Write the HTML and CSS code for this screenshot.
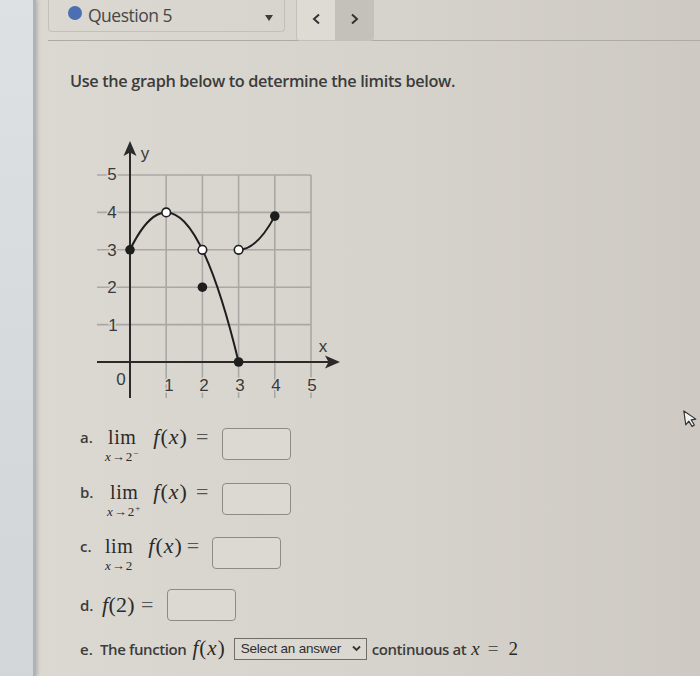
FILE: index.html
```html
<!DOCTYPE html>
<html>
<head>
<meta charset="utf-8">
<title>Question 5</title>
<link rel="stylesheet" href="styles.css">
</head>
<body>
<div class="sidebar"></div>
<div class="main">
  <div class="topbar">
    <div class="qbox">
      <span class="dot"></span>
      <span class="qtitle">Question 5</span>
      <span class="caret"></span>
    </div>
    <div class="nav">
      <span class="navbtn prev"><svg width="9" height="12" viewBox="0 0 9 12"><polyline points="7,1.5 2,6 7,10.5" fill="none" stroke="#333" stroke-width="2"/></svg></span>
      <span class="navbtn next"><svg width="9" height="12" viewBox="0 0 9 12"><polyline points="2,1.5 7,6 2,10.5" fill="none" stroke="#333" stroke-width="2"/></svg></span>
    </div>
  </div>

  <div class="content">
    <p class="intro">Use the graph below to determine the limits below.</p>

    <svg class="graph" width="262" height="265" viewBox="0 0 262 265">
      <g stroke="#a9a8a4" stroke-width="1.6">
        <line x1="12" y1="188.6" x2="226" y2="188.6"/>
        <line x1="12" y1="151.2" x2="226" y2="151.2"/>
        <line x1="12" y1="113.8" x2="226" y2="113.8"/>
        <line x1="12" y1="76.4" x2="226" y2="76.4"/>
        <line x1="12" y1="39" x2="226" y2="39"/>
        <line x1="81.2" y1="39" x2="81.2" y2="262"/>
        <line x1="117.4" y1="39" x2="117.4" y2="262"/>
        <line x1="153.6" y1="39" x2="153.6" y2="262"/>
        <line x1="189.8" y1="39" x2="189.8" y2="262"/>
        <line x1="226" y1="39" x2="226" y2="262"/>
      </g>
      <g stroke="#2a2a2a" stroke-width="2">
        <line x1="45" y1="262" x2="45" y2="14"/>
        <line x1="12" y1="226" x2="246" y2="226"/>
      </g>
      <polygon points="45,5 38.5,20 45,16.5 51.5,20" fill="#2a2a2a"/>
      <polygon points="255,226 240,219.5 243.5,226 240,232.5" fill="#2a2a2a"/>
      <g class="lbl" font-family="Liberation Sans, Arial, sans-serif" font-size="17" fill="#3a3a3a" text-anchor="middle">
        <text x="27" y="44">5</text>
        <text x="27" y="82">4</text>
        <text x="27" y="119.5">3</text>
        <text x="27" y="157">2</text>
        <text x="28" y="194.5">1</text>
        <text x="36" y="249">0</text>
        <text x="84" y="255">1</text>
        <text x="119" y="255">2</text>
        <text x="155" y="255">3</text>
        <text x="191" y="255">4</text>
        <text x="227" y="255">5</text>
      </g>
      <text x="60" y="23" font-family="Liberation Sans, Arial, sans-serif" font-size="17" fill="#3a3a3a" text-anchor="middle">y</text>
      <text x="238" y="216" font-family="Liberation Sans, Arial, sans-serif" font-size="17" fill="#3a3a3a" text-anchor="middle">x</text>
      <g fill="none" stroke="#1e1e1e" stroke-width="2">
        <path d="M45,113.8 Q99.3,1.6 153.6,226"/>
        <path d="M153.6,113.8 Q171.7,113.8 189.8,80.1"/>
      </g>
      <g fill="#1e1e1e">
        <circle cx="45" cy="113.8" r="4.8"/>
        <circle cx="153.6" cy="226" r="4.8"/>
        <circle cx="117.4" cy="151.2" r="4.8"/>
        <circle cx="189.8" cy="80.1" r="4.8"/>
      </g>
      <g fill="#ffffff" stroke="#1e1e1e" stroke-width="1.6">
        <circle cx="81.2" cy="76.4" r="4.3"/>
        <circle cx="117.4" cy="113.8" r="4.3"/>
        <circle cx="153.6" cy="113.8" r="4.3"/>
      </g>
    </svg>

    <div class="q q-a">
      <span class="label">a.</span>
      <span class="lim"><span class="op">lim</span><span class="sub"><i>x</i>→2<sup>−</sup></span></span>
      <span class="fx"><i>f</i>(<i>x</i>)<span class="eq">=</span></span>
      <span class="ans"></span>
    </div>

    <div class="q q-b">
      <span class="label">b.</span>
      <span class="lim"><span class="op">lim</span><span class="sub"><i>x</i>→2<sup>+</sup></span></span>
      <span class="fx"><i>f</i>(<i>x</i>)<span class="eq">=</span></span>
      <span class="ans"></span>
    </div>

    <div class="q q-c">
      <span class="label">c.</span>
      <span class="lim"><span class="op">lim</span><span class="sub"><i>x</i>→2</span></span>
      <span class="fx"><i>f</i>(<i>x</i>)<span class="eq">=</span></span>
      <span class="ans"></span>
    </div>

    <div class="q q-d">
      <span class="label">d.</span>
      <span class="fx"><i>f</i>(2)<span class="eq">=</span></span>
      <span class="ans"></span>
    </div>

    <div class="q q-e">
      <span class="label">e.</span>
      <span class="txt">The function</span>
      <span class="fxi"><i>f</i>(<i>x</i>)</span>
      <span class="sel">Select an answer<svg width="9" height="7" viewBox="0 0 9 7"><polyline points="1,1.5 4.5,5 8,1.5" fill="none" stroke="#333" stroke-width="1.8"/></svg></span>
      <span class="txt">continuous at</span>
      <span class="fxi fxe"><i>x</i><span class="eq2">=</span>2</span>
    </div>
  </div>
</div>
<svg class="cursor" width="14" height="20" viewBox="0 0 14 20">
  <path d="M1,1 L1,15 L4.5,11.8 L7,17.5 L9.5,16.4 L7,10.8 L11.8,10.8 Z" fill="#f4f4f4" stroke="#333" stroke-width="1.2" stroke-linejoin="round"/>
</svg>
</body>
</html>
```

FILE: styles.css
```css
html, body {
  margin: 0;
  padding: 0;
}

body {
  width: 700px;
  height: 676px;
  overflow: hidden;
  display: flex;
  position: relative;
  background: linear-gradient(to right, #dcd9d3 0%, #d6d3cc 55%, #cecac3 100%);
  font-family: "Open Sans", "Noto Sans", sans-serif;
  color: #3a3a3a;
}

.sidebar {
  width: 33px;
  flex: none;
  background: linear-gradient(to bottom, #dde1e4, #d5d9dc 60%, #d3d6d8);
  border-right: 3px solid #aeb3b7;
  box-shadow: 2px 0 3px rgba(120, 125, 130, 0.35);
}

.main {
  flex: 1;
  padding-left: 12px;
  display: flex;
  flex-direction: column;
}

.topbar {
  display: flex;
  align-items: flex-start;
  height: 41px;
  border-bottom: 1px solid #aeaba5;
  box-sizing: border-box;
}

.qbox {
  width: 237px;
  height: 32px;
  box-sizing: border-box;
  border: 1px solid #c3c0ba;
  border-top: none;
  border-radius: 0 0 4px 4px;
  display: flex;
  align-items: center;
  padding-left: 19px;
  padding-right: 11px;
}

.dot {
  width: 14px;
  height: 14px;
  border-radius: 50%;
  background: #4b6fb3;
  margin-right: 6px;
  margin-top: -6px;
}

.qtitle {
  font-size: 17.5px;
  font-weight: 500;
  letter-spacing: -0.5px;
  color: #474747;
  margin-top: -2px;
  flex: 1;
}

.caret {
  width: 0;
  height: 0;
  border-left: 4.5px solid transparent;
  border-right: 4.5px solid transparent;
  border-top: 6px solid #3d3d3d;
  margin-top: 4px;
}

.nav {
  margin-left: 11px;
  display: flex;
  height: 40px;
  border: 1px solid #c3c0ba;
  border-top: none;
  border-radius: 0 0 4px 4px;
  overflow: hidden;
}

.navbtn {
  width: 38px;
  display: flex;
  align-items: center;
  justify-content: center;
  padding-bottom: 2px;
}

.prev {
  background: #dedbd5;
}

.next {
  background: #c4c1bb;
}

.content {
  padding-left: 22px;
  display: flex;
  flex-direction: column;
  align-items: flex-start;
}

.intro {
  margin: 29px 0 0 0;
  font-size: 16.3px;
  font-weight: 600;
  line-height: 22px;
  letter-spacing: -0.35px;
  color: #3c3c3c;
}

.graph {
  display: block;
  margin: 44px 0 0 15px;
}

.lbl text {
  paint-order: stroke;
  stroke: #dad7d0;
  stroke-width: 3px;
}

.q {
  display: flex;
  align-items: center;
  margin-left: 10px;
  height: 34px;
  font-family: "Liberation Serif", "Times New Roman", serif;
  color: #2a2a2a;
}

.q-a { margin-top: 26px; }
.q-b { margin-top: 21px; }
.q-c { margin-top: 20px; }
.q-d { margin-top: 18px; }
.q-e { margin-top: 15px; height: 23px; }

.label {
  font-family: "Open Sans", "Noto Sans", sans-serif;
  font-size: 15px;
  font-weight: 600;
  color: #3c3c3c;
  width: 25px;
  align-self: flex-start;
  line-height: 20px;
}

.q-b .label { width: 27px; }

.q-d .label,
.q-e .label {
  align-self: center;
  width: 22px;
}

.q-e .label {
  width: 20px;
}

.lim {
  display: flex;
  flex-direction: column;
  align-items: center;
  align-self: flex-start;
}

.lim .op {
  font-size: 20px;
  line-height: 20px;
  letter-spacing: 0.5px;
}

.lim .sub {
  font-size: 13px;
  line-height: 14px;
  margin-top: 3px;
  white-space: nowrap;
  letter-spacing: 1px;
}

.lim .sub sup {
  font-size: 9px;
  line-height: 0;
  vertical-align: 5px;
}

.fx {
  font-size: 22px;
  line-height: 20px;
  letter-spacing: 1px;
  align-self: flex-start;
  white-space: nowrap;
}

.q-d .fx {
  align-self: center;
  letter-spacing: 0.3px;
}

.eq {
  color: #555;
  margin: 0 13px 0 8px;
}

.q-a .fx { margin-left: 14px; }
.q-b .fx { margin-left: 12px; }
.q-c .fx { margin-left: 15px; }
.q-c .eq { margin: 0 12px 0 4px; }
.q-d .eq { margin: 0 13px 0 6px; }

.ans {
  width: 69px;
  height: 32px;
  box-sizing: border-box;
  border: 1px solid #8e8b86;
  border-radius: 4px;
  background: #dcd9d3;
}

.txt {
  font-family: "Open Sans", "Noto Sans", sans-serif;
  font-size: 15px;
  font-weight: 600;
  letter-spacing: -0.4px;
  color: #3c3c3c;
  white-space: nowrap;
}

.fxi {
  font-size: 21px;
  letter-spacing: 1px;
  margin: 0 8px 0 6px;
  white-space: nowrap;
}

.fxe {
  font-size: 19px;
  letter-spacing: 0;
  margin: 0 0 0 5px;
}

.eq2 {
  color: #555;
  margin: 0 10px 0 8px;
}

.sel {
  display: flex;
  align-items: center;
  justify-content: space-between;
  flex: none;
  height: 22px;
  box-sizing: border-box;
  width: 133px;
  padding: 0 5px 0 6px;
  border: 1px solid #6f6d69;
  background: #dbd8d2;
  font-family: "Liberation Sans", Arial, sans-serif;
  font-size: 13.5px;
  letter-spacing: -0.2px;
  color: #2e2e2e;
  white-space: nowrap;
  margin-right: 5px;
}

.cursor {
  position: absolute;
  left: 684px;
  top: 409px;
  transform: rotate(-8deg);
}
```
